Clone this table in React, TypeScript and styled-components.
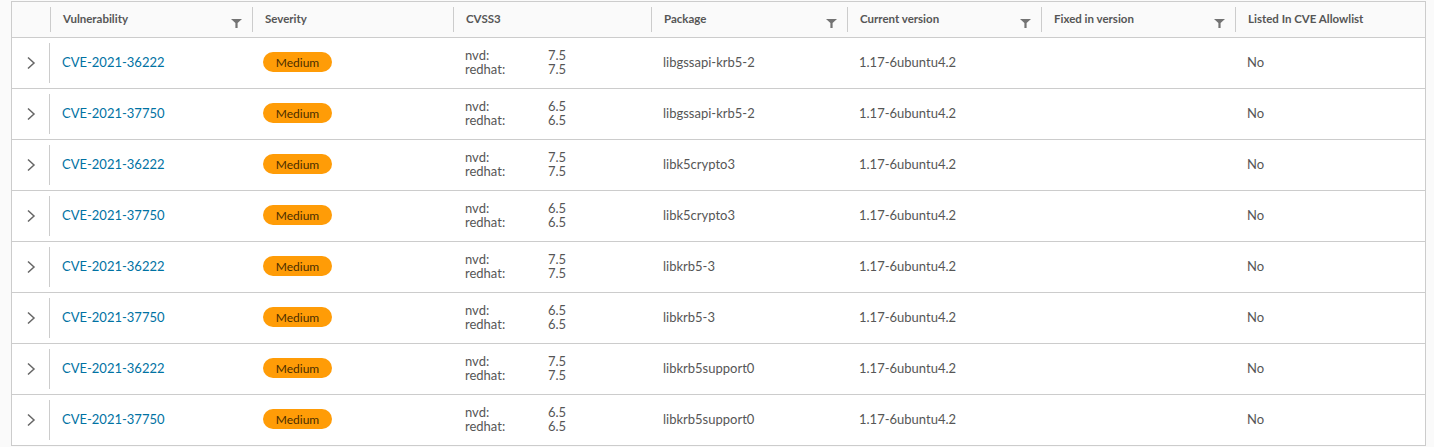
import React from "react";
import styled, { createGlobalStyle } from "styled-components";

const Global = createGlobalStyle`
  html, body { margin: 0; padding: 0; background: #fafafa; }
  body { font-family: "Lato", "Open Sans", sans-serif; }
`;

const Page = styled.div`
  padding: 1px 8px 0 11px;
`;

const COLS = "38px 202px 201px 198px 196px 194px 194px 1fr";

const Table = styled.div`
  border: 1px solid #ccc;
  border-bottom: none;
  background: #fff;
`;

const HeaderRow = styled.div`
  display: grid;
  grid-template-columns: ${COLS};
  height: 35px;
  background: #fafafa;
  border-bottom: 1px solid #ccc;
`;

const HeadCell = styled.div<{ $sep?: boolean }>`
  display: flex;
  align-items: flex-start;
  justify-content: space-between;
  margin: 5px 0 5px;
  padding: 5px 10px 0 12px;
  font-size: 11.5px;
  font-weight: 700;
  color: #565656;
  border-left: ${(p) => (p.$sep ? "1px solid #ccc" : "none")};
`;

const FilterIcon = styled.svg`
  width: 11px;
  height: 9px;
  margin-top: 7px;
  flex: none;
`;

const BodyRow = styled.div`
  display: grid;
  grid-template-columns: ${COLS};
  height: 50px;
  border-bottom: 1px solid #ccc;
`;

const ExpandCell = styled.div`
  display: flex;
  align-items: center;
  justify-content: center;
  margin: 5px 0 5px;
  padding-bottom: 1px;
  border-right: 1px solid #ccc;
  color: #666;
`;

const Cell = styled.div`
  display: flex;
  align-items: center;
  padding: 0 12px 2px;
  font-size: 13px;
  color: #565656;
`;

const Link = styled.a`
  color: #0072a3;
  text-decoration: none;
`;

const Badge = styled.span`
  display: inline-flex;
  align-items: center;
  justify-content: center;
  height: 20px;
  width: 69px;
  margin-left: -1px;
  border-radius: 10px;
  background: #ff9c07;
  color: #4a2d00;
  font-size: 12px;
`;

const ScoreGrid = styled.div`
  display: grid;
  grid-template-columns: 83px auto;
  line-height: 14px;
`;

const Chevron = () => (
  <svg width="12" height="14" viewBox="0 0 12 14">
    <path d="M3 1.5 L9 7 L3 12.5" fill="none" stroke="#666" strokeWidth="1.5" />
  </svg>
);

const Filter = () => (
  <FilterIcon viewBox="0 0 11 9">
    <path d="M0 0 H11 L6.6 4 V9 H4.4 V4 Z" fill="#737373" />
  </FilterIcon>
);

const headers: { label: string; filter: boolean }[] = [
  { label: "Vulnerability", filter: true },
  { label: "Severity", filter: false },
  { label: "CVSS3", filter: false },
  { label: "Package", filter: true },
  { label: "Current version", filter: true },
  { label: "Fixed in version", filter: true },
  { label: "Listed In CVE Allowlist", filter: false },
];

const rows = [
  ["CVE-2021-36222", "7.5", "libgssapi-krb5-2"],
  ["CVE-2021-37750", "6.5", "libgssapi-krb5-2"],
  ["CVE-2021-36222", "7.5", "libk5crypto3"],
  ["CVE-2021-37750", "6.5", "libk5crypto3"],
  ["CVE-2021-36222", "7.5", "libkrb5-3"],
  ["CVE-2021-37750", "6.5", "libkrb5-3"],
  ["CVE-2021-36222", "7.5", "libkrb5support0"],
  ["CVE-2021-37750", "6.5", "libkrb5support0"],
];

export default function App() {
  return (
    <Page>
      <Global />
      <Table>
        <HeaderRow>
          <HeadCell />
          {headers.map((h) => (
            <HeadCell key={h.label} $sep>
              <span>{h.label}</span>
              {h.filter && <Filter />}
            </HeadCell>
          ))}
        </HeaderRow>
        {rows.map(([cve, score, pkg], i) => (
          <BodyRow key={i}>
            <ExpandCell>
              <Chevron />
            </ExpandCell>
            <Cell>
              <Link href="#">{cve}</Link>
            </Cell>
            <Cell>
              <Badge>Medium</Badge>
            </Cell>
            <Cell>
              <ScoreGrid>
                <span>nvd:</span>
                <span>{score}</span>
                <span>redhat:</span>
                <span>{score}</span>
              </ScoreGrid>
            </Cell>
            <Cell>{pkg}</Cell>
            <Cell>1.17-6ubuntu4.2</Cell>
            <Cell />
            <Cell>No</Cell>
          </BodyRow>
        ))}
      </Table>
    </Page>
  );
}
